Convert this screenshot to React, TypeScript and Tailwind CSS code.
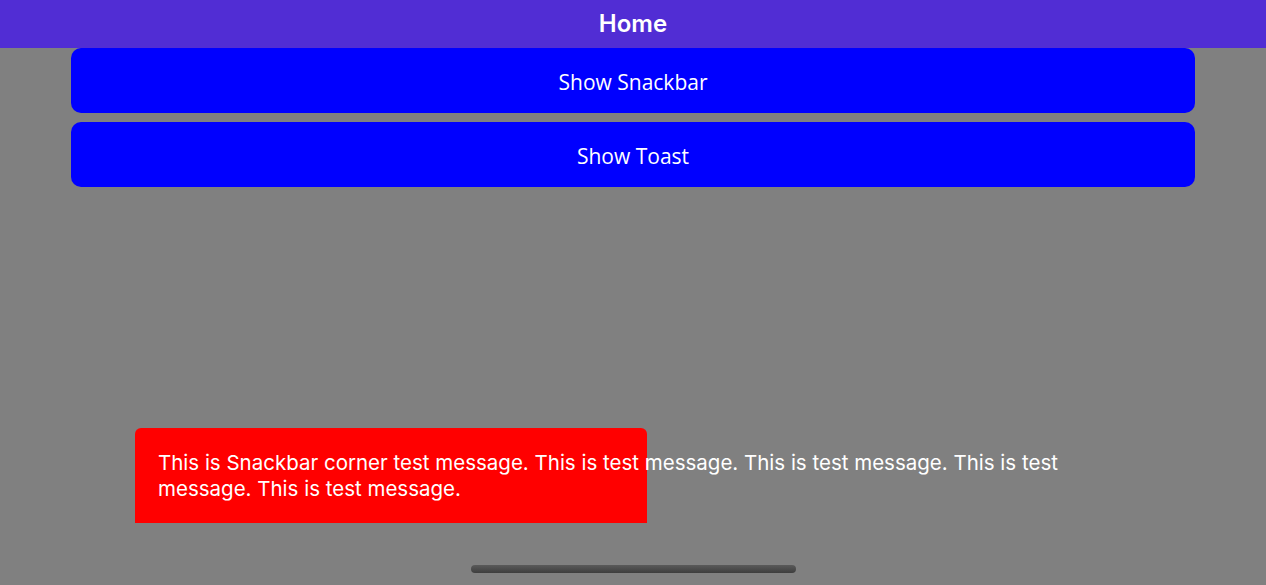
export default function App() {
  return (
    <div className="relative w-[1266px] h-[585px] bg-[#808080] overflow-hidden">
      {/* nav bar */}
      <div className="h-12 bg-[#512dd4] flex items-center justify-center">
        <h1 className="text-white text-[24px] font-semibold [font-family:Inter,sans-serif]">Home</h1>
      </div>

      <div className="px-[71px] flex flex-col gap-[9px]">
        <button className="h-[65px] w-full bg-[#0000ff] rounded-[10px] text-white text-[21px] pt-[4px] [font-family:'Open_Sans',sans-serif]">
          Show Snackbar
        </button>
        <button className="h-[65px] w-full bg-[#0000ff] rounded-[10px] text-white text-[21px] pt-[4px] [font-family:'Open_Sans',sans-serif]">
          Show Toast
        </button>
      </div>

      {/* snackbar overlay */}
      <div className="absolute left-[135px] top-[428px] w-[512px] h-[95px] bg-[#ff0000] rounded-t-[6px]">
        <p className="w-[950px] pl-[23px] pt-[22px] text-white text-[20.5px] leading-[26px] [font-family:Inter,sans-serif]">
          This is Snackbar corner test message. This is test message. This is test message. This is test message. This is test message.
        </p>
      </div>

      {/* home indicator */}
      <div className="absolute left-[471px] top-[565px] w-[325px] h-[8px] rounded-full bg-gradient-to-b from-[#5a5a5a] to-[#3e3e3e]" />
    </div>
  );
}
